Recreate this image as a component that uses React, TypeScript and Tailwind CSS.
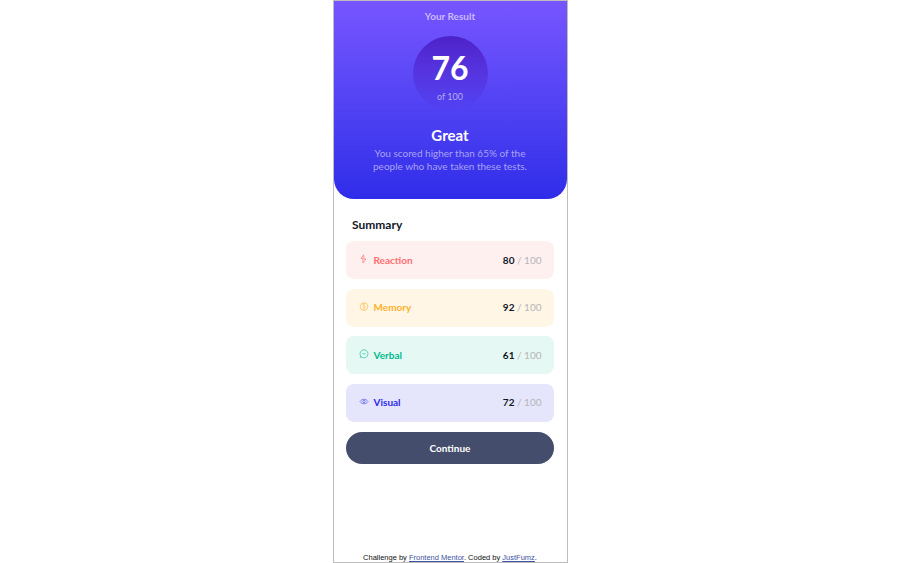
import React from 'react';

interface SummaryRow {
  label: string;
  score: number;
  box: string;
  text: string;
  icon: React.ReactNode;
}

const rows: SummaryRow[] = [
  {
    label: 'Reaction',
    score: 80,
    box: 'bg-[#fff0f0]',
    text: 'text-[#ff6f6f]',
    icon: (
      <svg width="9" height="10" viewBox="0 0 9 10" fill="none" stroke="currentColor" strokeWidth="0.8" opacity="0.85">
        <path d="M4.6 0.8 2 4.4h2L3.9 9 7 5H4.9z" strokeLinejoin="round" />
      </svg>
    ),
  },
  {
    label: 'Memory',
    score: 92,
    box: 'bg-[#fff6e6]',
    text: 'text-[#ffb22e]',
    icon: (
      <svg width="10" height="10" viewBox="0 0 10 10" fill="none" stroke="currentColor" strokeWidth="0.7" opacity="0.85">
        <circle cx="5" cy="4.6" r="3.8" />
        <path d="M5 .8v7.6M5 3.6 3.4 2.8M5 5.6 6.8 4.6" />
      </svg>
    ),
  },
  {
    label: 'Verbal',
    score: 61,
    box: 'bg-[#e6f8f3]',
    text: 'text-[#00bb8f]',
    icon: (
      <svg width="10" height="10" viewBox="0 0 10 10" fill="none" stroke="currentColor" strokeWidth="0.7" opacity="0.85">
        <path d="M5 .8a4 4 0 1 1-2.4 7.2l-1.3.6.4-1.5A4 4 0 0 1 5 .8z" strokeLinejoin="round" />
        <path d="M3.3 4.8h3.4" />
      </svg>
    ),
  },
  {
    label: 'Visual',
    score: 72,
    box: 'bg-[#e5e5fc]',
    text: 'text-[#2e2be9]',
    icon: (
      <svg width="10" height="7" viewBox="0 0 10 7" fill="none" stroke="currentColor" strokeWidth="0.7" opacity="0.75">
        <path d="M1 3.5c2-3 6-3 8 0-2 3-6 3-8 0z" />
        <circle cx="5" cy="3.5" r="1.2" />
      </svg>
    ),
  },
];

const App: React.FC = () => {
  return (
    <div className="flex h-[563px] justify-center overflow-hidden bg-white font-['Lato',sans-serif]">
      <div className="flex w-[235px] flex-col border border-[#bdbdbd]">
        {/* Result panel */}
        <div className="flex h-[198px] flex-col items-center rounded-b-[20px] bg-gradient-to-b from-[#7755ff] to-[#2f2ce9] pt-[9px]">
          <p className="text-[10px] leading-[12px] font-bold text-[#c8bbff]">Your Result</p>
          <div className="mt-[14px] flex h-[75px] w-[75px] flex-col items-center rounded-full bg-gradient-to-b from-[#4d21c9] to-[#2f2ce9]/0 pt-[14px]">
            <span className="text-[32px] leading-[36px] font-bold text-white">76</span>
            <span className="mt-[5px] text-[9px] leading-[11px] text-[#b4aaf5]">of 100</span>
          </div>
          <p className="mt-[15px] text-[15px] leading-[18px] font-bold text-white">Great</p>
          <p className="mt-[3px] w-[180px] text-center text-[10px] leading-[13px] text-[#a9a2f5]">
            You scored higher than 65% of the people who have taken these tests.
          </p>
        </div>

        {/* Summary */}
        <div className="flex flex-col px-[12.5px] pt-[18px]">
          <h2 className="pl-[6px] text-[12px] leading-[15px] font-bold text-[#111827]">Summary</h2>
          <div className="mt-[9px] flex flex-col gap-[9.6px]">
            {rows.map((row) => (
              <div key={row.label} className={`flex h-[38px] items-center rounded-[8px] pr-[12.5px] pl-[12.5px] ${row.box}`}>
                <span className={`flex w-[15px] -translate-y-[1px] justify-start ${row.text}`}>{row.icon}</span>
                <span className={`text-[10px] font-bold ${row.text}`}>{row.label}</span>
                <span className="ml-auto text-[10px] text-[#b5b5b8]">
                  <b className="font-bold text-[#111827]">{row.score}</b> / 100
                </span>
              </div>
            ))}
          </div>
          <button className="mt-[10.4px] h-[32px] rounded-full bg-[#444d6b] text-[10px] font-bold text-white">
            Continue
          </button>
        </div>

        {/* Footer */}
        <p className="mt-auto text-center font-['Liberation_Sans',sans-serif] text-[7.5px] leading-[9px] text-[#111]">
          Challenge by <a className="text-[#3e52a3] underline">Frontend Mentor</a>. Coded by{' '}
          <a className="text-[#3e52a3] underline">JustFumz</a>.
        </p>
      </div>
    </div>
  );
};

export default App;
